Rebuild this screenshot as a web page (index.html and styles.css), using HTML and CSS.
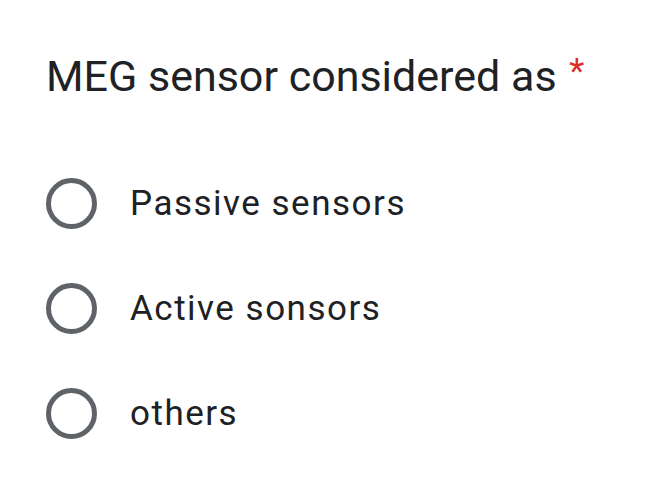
FILE: index.html
```html
<!DOCTYPE html>
<html>
<head>
<meta charset="utf-8">
<link rel="stylesheet" href="styles.css">
</head>
<body>
<div class="question">
  <div class="title">MEG sensor considered as <span class="req">*</span></div>
  <div class="options">
    <div class="option"><span class="radio"></span><span class="label">Passive sensors</span></div>
    <div class="option"><span class="radio"></span><span class="label">Active sonsors</span></div>
    <div class="option"><span class="radio"></span><span class="label">others</span></div>
  </div>
</div>
</body>
</html>
```

FILE: styles.css
```css
html, body {
  margin: 0;
  padding: 0;
  background: #ffffff;
}
body {
  width: 657px;
  height: 498px;
  overflow: hidden;
  font-family: Roboto, "Liberation Sans", sans-serif;
  color: #202124;
}
.question {
  padding: 46px 0 0 46px;
}
.title {
  font-size: 43px;
  line-height: 60px;
  letter-spacing: 0;
}
.req {
  color: #d93025;
  font-size: 35px;
  vertical-align: top;
  position: relative;
  top: -4px;
  margin-left: 2px;
}
.options {
  display: flex;
  flex-direction: column;
  gap: 51px;
  margin-top: 70px;
}
.option {
  display: flex;
  align-items: center;
  height: 54px;
}
.radio {
  box-sizing: border-box;
  width: 51px;
  height: 51px;
  border: 5px solid #5f6368;
  border-radius: 50%;
  flex: none;
}
.label {
  margin-left: 33px;
  font-size: 35px;
  letter-spacing: 1.5px;
}
```
